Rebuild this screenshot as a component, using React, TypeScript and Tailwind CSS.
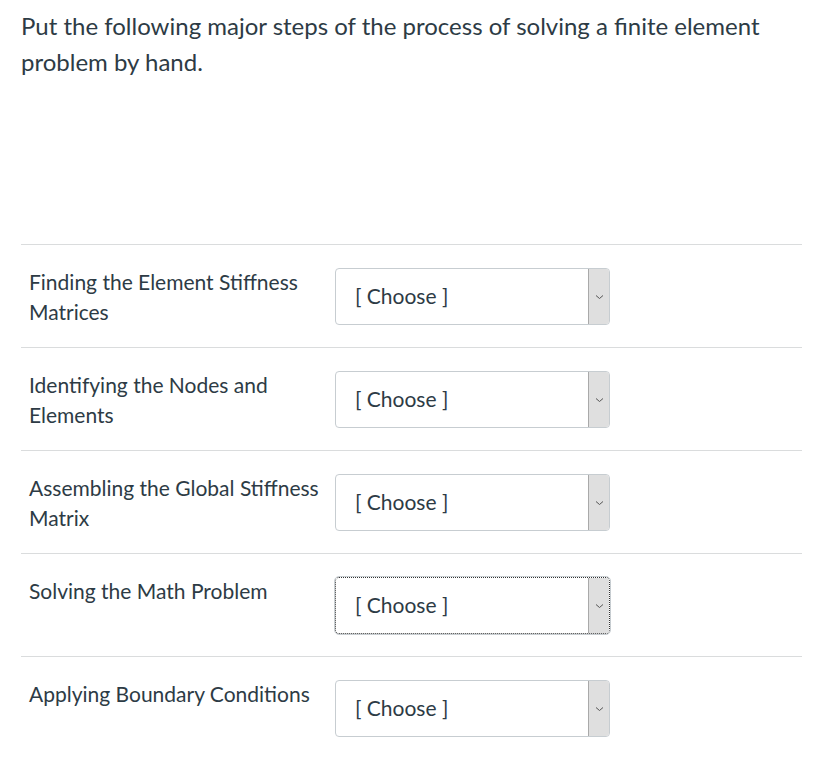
const rows = [
  'Finding the Element Stiffness Matrices',
  'Identifying the Nodes and Elements',
  'Assembling the Global Stiffness Matrix',
  'Solving the Math Problem',
  'Applying Boundary Conditions',
]

function ChooseBox({ focused }: { focused?: boolean }) {
  return (
    <div
      className={
        focused
          ? 'flex h-[57px] w-[275px] items-stretch overflow-hidden rounded-[4px] border border-dotted border-[#333] outline outline-1 outline-[#c7cdd1]'
          : 'flex h-[57px] w-[275px] items-stretch overflow-hidden rounded-[4px] border border-[#c7cdd1]'
      }
    >
      <div className="flex flex-1 items-center pb-[2px] pl-[19px] text-[21px] text-[#2d3b45]">[ Choose ]</div>
      <div className="flex w-[21px] items-center justify-center border-l border-[#a9a9a9] bg-[#dfdfdf]">
        <svg width="9" height="6" viewBox="0 0 9 6" fill="none">
          <path d="M1 1.5 L4.5 4.5 L8 1.5" stroke="#555" strokeWidth="1" />
        </svg>
      </div>
    </div>
  )
}

export default function App() {
  return (
    <div className="min-h-[771px] bg-white pl-[21px] pr-[29px] pt-[8px] font-['Lato',sans-serif] text-[#2d3b45]">
      <p className="text-[24px] leading-[36px]">
        Put the following major steps of the process of solving a finite element problem by hand.
      </p>
      <div className="mt-[164px]">
        {rows.map((label, i) => (
          <div key={label} className="flex h-[103px] items-start border-t border-[#dadcdd] pt-[22px]">
            <div className="w-[314px] pl-2 pr-2 text-[21px] leading-[30px]">{label}</div>
            <div className="pt-px">
              <ChooseBox focused={i === 3} />
            </div>
          </div>
        ))}
      </div>
    </div>
  )
}
